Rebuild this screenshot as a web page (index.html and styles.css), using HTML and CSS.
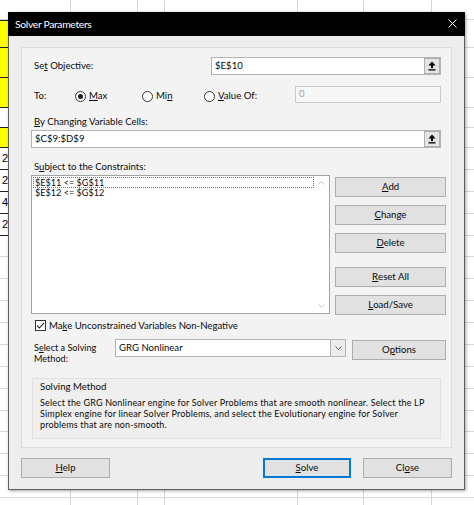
FILE: index.html
```html
<!DOCTYPE html>
<html>
<head>
<meta charset="utf-8">
<title>Solver Parameters</title>
<link rel="stylesheet" href="styles.css">
</head>
<body>
<div class="sheet">
  <div class="srow h20"><div class="ca"></div><div class="rest"></div></div>
  <div class="srow h28"><div class="ca yellow first"></div><div class="rest"></div></div>
  <div class="srow h30"><div class="ca yellow"></div><div class="rest"></div></div>
  <div class="srow h30"><div class="ca yellow"></div><div class="rest"></div></div>
  <div class="srow h20"><div class="ca plain"></div><div class="rest"></div></div>
  <div class="srow h20"><div class="ca yellow"></div><div class="rest"></div></div>
  <div class="srow hr"><div class="ca boxed">2</div><div class="rest"></div></div>
  <div class="srow hr"><div class="ca boxed">2</div><div class="rest"></div></div>
  <div class="srow hr"><div class="ca boxed">4</div><div class="rest"></div></div>
  <div class="srow hr"><div class="ca boxed">2</div><div class="rest"></div></div>
  <div class="srow hr"><div class="ca"></div><div class="rest"></div></div>
  <div class="srow hr"><div class="ca"></div><div class="rest"></div></div>
  <div class="srow hr"><div class="ca"></div><div class="rest"></div></div>
  <div class="srow hr"><div class="ca"></div><div class="rest"></div></div>
  <div class="srow hr"><div class="ca"></div><div class="rest"></div></div>
  <div class="srow hr"><div class="ca"></div><div class="rest"></div></div>
  <div class="srow hr"><div class="ca"></div><div class="rest"></div></div>
  <div class="srow hr"><div class="ca"></div><div class="rest"></div></div>
  <div class="srow hr"><div class="ca"></div><div class="rest"></div></div>
  <div class="srow hr"><div class="ca"></div><div class="rest"></div></div>
  <div class="srow hr"><div class="ca"></div><div class="rest"></div></div>
  <div class="srow hr"><div class="ca"></div><div class="rest"></div></div>
  <div class="srow hr"><div class="ca"></div><div class="rest"></div></div>
</div>

<div class="dialog">
  <div class="titlebar">
    <span class="title">Solver Parameters</span>
    <svg class="close" width="9" height="9" viewBox="0 0 9 9"><path d="M0.5 0.5 L8.5 8.5 M8.5 0.5 L0.5 8.5" stroke="#fff" stroke-width="1" fill="none"/></svg>
  </div>
  <div class="dlg-body">
    <div class="panel">
      <div class="row-obj">
        <span class="lbl">Se<u>t</u> Objective:</span>
        <div class="refedit obj">
          <span class="val">$E$10</span>
          <span class="rbtn"><svg width="8" height="10" viewBox="0 0 8 10"><polygon points="4,0.5 7.6,4.6 5,4.6 5,7 3,7 3,4.6 0.4,4.6" fill="#000"/><rect x="0.5" y="8.2" width="7" height="1.3" fill="#000"/></svg></span>
        </div>
      </div>
      <div class="row-to">
        <span class="lbl to">To:</span>
        <span class="radio r-max"><span class="circle on"></span><span class="rtxt"><u>M</u>ax</span></span>
        <span class="radio r-min"><span class="circle"></span><span class="rtxt">Mi<u>n</u></span></span>
        <span class="radio r-val"><span class="circle"></span><span class="rtxt"><u>V</u>alue Of:</span></span>
        <span class="textbox disabled">0</span>
      </div>
      <div class="lbl sec"><u>B</u>y Changing Variable Cells:</div>
      <div class="refedit full">
        <span class="val">$C$9:$D$9</span>
        <span class="rbtn"><svg width="8" height="10" viewBox="0 0 8 10"><polygon points="4,0.5 7.6,4.6 5,4.6 5,7 3,7 3,4.6 0.4,4.6" fill="#000"/><rect x="0.5" y="8.2" width="7" height="1.3" fill="#000"/></svg></span>
      </div>
      <div class="lbl sec">S<u>u</u>bject to the Constraints:</div>
      <div class="constraints">
        <div class="listbox">
          <div class="items">
            <div class="item focus">$E$11 &lt;= $G$11</div>
            <div class="item">$E$12 &lt;= $G$12</div>
          </div>
          <div class="vscroll">
            <span class="chev"><svg width="7" height="4" viewBox="0 0 7 4"><path d="M0.5 3.5 L3.5 0.5 L6.5 3.5" stroke="#c4c4c4" stroke-width="1" fill="none"/></svg></span>
            <span class="chev"><svg width="7" height="4" viewBox="0 0 7 4"><path d="M0.5 0.5 L3.5 3.5 L6.5 0.5" stroke="#c4c4c4" stroke-width="1" fill="none"/></svg></span>
          </div>
        </div>
        <div class="side-btns">
          <div class="btn"><u>A</u>dd</div>
          <div class="btn"><u>C</u>hange</div>
          <div class="btn"><u>D</u>elete</div>
          <div class="btn gap-big"><u>R</u>eset All</div>
          <div class="btn"><u>L</u>oad/Save</div>
        </div>
      </div>
      <div class="check-row">
        <span class="checkbox"><svg width="9" height="9" viewBox="0 0 9 9"><path d="M1 4.6 L3.4 7 L8 1.8" stroke="#222" stroke-width="1.1" fill="none"/></svg></span>
        <span class="ctxt">Ma<u>k</u>e Unconstrained Variables Non-Negative</span>
      </div>
      <div class="method-row">
        <div class="lbl method-lbl"><div class="mline">S<u>e</u>lect a Solving</div><div class="mline">Method:</div></div>
        <div class="select">
          <span class="sval">GRG Nonlinear</span>
          <span class="drop"><svg width="7" height="4" viewBox="0 0 7 4"><path d="M0.5 0.5 L3.5 3.5 L6.5 0.5" stroke="#555" stroke-width="1" fill="none"/></svg></span>
        </div>
        <div class="btn options">O<u>p</u>tions</div>
      </div>
      <div class="groupbox">
        <div class="gb-title">Solving Method</div>
        <div class="gb-text">
          <div class="gline">Select the GRG Nonlinear engine for Solver Problems that are smooth nonlinear. Select the LP</div>
          <div class="gline">Simplex engine for linear Solver Problems, and select the Evolutionary engine for Solver</div>
          <div class="gline">problems that are non-smooth.</div>
        </div>
      </div>
    </div>
    <div class="footer">
      <div class="btn fbtn"><u>H</u>elp</div>
      <div class="btn fbtn solve"><u>S</u>olve</div>
      <div class="btn fbtn close-btn">Cl<u>o</u>se</div>
    </div>
  </div>
</div>
</body>
</html>
```

FILE: styles.css
```css
* { box-sizing: border-box; }

html, body {
  margin: 0;
  padding: 0;
}

body {
  width: 474px;
  height: 505px;
  overflow: hidden;
  position: relative;
  background: #ffffff;
  font-family: "Lato", "Open Sans", sans-serif;
}

/* ---------- spreadsheet behind ---------- */
.sheet {
  display: flex;
  flex-direction: column;
  width: 474px;
  height: 505px;
  background-image:
    linear-gradient(#d6d6d6, #d6d6d6),
    linear-gradient(#d6d6d6, #d6d6d6),
    linear-gradient(#d6d6d6, #d6d6d6),
    linear-gradient(#d6d6d6, #d6d6d6),
    linear-gradient(#d6d6d6, #d6d6d6),
    linear-gradient(#d6d6d6, #d6d6d6);
  background-size: 1px 100%;
  background-repeat: no-repeat;
  background-position: 70px 0, 137px 0, 164px 0, 297px 0, 363px 0, 431px 0;
}

.srow {
  display: flex;
  flex: none;
}
.h20 { height: 20px; }
.h28 { height: 28px; }
.h30 { height: 30px; }
.hr  { height: 21.875px; }

.ca {
  width: 70px;
  border-bottom: 1px solid #d6d6d6;
  font-family: "Liberation Sans", Arial, sans-serif;
  font-size: 11px;
  line-height: 20px;
  padding-left: 2px;
  color: #000;
}
.rest {
  flex: 1;
  border-bottom: 1px solid #d6d6d6;
}
.ca.yellow {
  background: #ffff00;
  border-bottom: 1px solid #222;
}
.ca.first { border-top: 1px solid #222; }
.ca.plain { border-bottom: 1px solid #222; }
.ca.boxed { border-bottom: 1px solid #222; }

/* ---------- dialog window ---------- */
.dialog {
  position: absolute;
  left: 8px;
  top: 12px;
  width: 457px;
  height: 478px;
  background: #ededed;
  border: 1px solid #5e5e5e;
  border-top: none;
  box-shadow: 1px 1px 3px rgba(0, 0, 0, 0.35);
  color: #0a0a0a;
  font-size: 9.6px;
  letter-spacing: 0;
}

.titlebar {
  height: 24px;
  margin: 0 -1px;
  background: #000;
  color: #fff;
  display: flex;
  align-items: center;
  justify-content: space-between;
  padding: 0 8px 1px 7px;
}
.title {
  font-size: 10.4px;
  letter-spacing: -0.35px;
}
.close { display: block; margin-top: -1px; }

.dlg-body {
  padding: 11px 12px 0 12px;
}

.panel {
  height: 401px;
  border: 1px solid #dcdcdc;
  background: #f3f3f3;
  padding: 9px 0 0 9px;
}

u { text-decoration: underline; text-underline-offset: 1px; }

.lbl {
  padding-left: 3px;
  line-height: 12px;
}

/* objective row */
.row-obj {
  width: 410px;
  height: 18px;
  display: flex;
  align-items: center;
}

.refedit {
  height: 18px;
  background: #fff;
  border: 1px solid #b3b3b3;
  display: flex;
  align-items: center;
  justify-content: space-between;
}
.refedit.obj {
  width: 230px;
  margin-left: auto;
}
.refedit.full {
  width: 410px;
  margin-top: 2px;
}
.val {
  padding-left: 3px;
  line-height: 14px;
}
.rbtn {
  width: 16px;
  height: 16px;
  background: #e4e4e4;
  border: 1px solid #b0b0b0;
  display: flex;
  align-items: center;
  justify-content: center;
}
.rbtn svg { display: block; }

/* To row */
.row-to {
  margin-top: 11px;
  height: 17px;
  display: flex;
  align-items: flex-start;
}
.lbl.to {
  width: 44px;
  margin-top: 4px;
}
.radio {
  display: flex;
  align-items: center;
  height: 12px;
  margin-top: 4px;
}
.r-max { width: 67px; }
.r-min { width: 62px; }
.r-val { width: 91px; }
.circle {
  width: 11px;
  height: 11px;
  border: 1px solid #333;
  border-radius: 50%;
  background: #fff;
  display: flex;
  align-items: center;
  justify-content: center;
  flex: none;
}
.circle.on::after {
  content: "";
  width: 5px;
  height: 5px;
  border-radius: 50%;
  background: #222;
}
.rtxt {
  margin-left: 3px;
  line-height: 12px;
}
.textbox {
  width: 146px;
  height: 17px;
  border: 1px solid #c9c9c9;
  padding-left: 3px;
  line-height: 14px;
}
.textbox.disabled {
  background: #f7f7f7;
  color: #a3a3a3;
}

.lbl.sec {
  margin-top: 13px;
  height: 12px;
}

/* constraints */
.constraints {
  margin-top: 2px;
  display: flex;
  align-items: flex-start;
}
.listbox {
  width: 299px;
  height: 139px;
  background: #fff;
  border: 1px solid #a2a2a2;
  display: flex;
}
.items {
  flex: 1;
  padding-top: 1px;
  padding-left: 1px;
}
.item {
  height: 11px;
  line-height: 10px;
  font-size: 9.1px;
  padding-left: 1px;
  width: 281px;
  border: 1px solid transparent;
  border-top: none;
  border-bottom: none;
}
.item.focus {
  border: 1px dotted #777;
  line-height: 9px;
}
.vscroll {
  width: 15px;
  display: flex;
  flex-direction: column;
  justify-content: space-between;
}
.chev {
  height: 14px;
  display: flex;
  align-items: center;
  justify-content: center;
}
.chev svg { display: block; }

.side-btns {
  margin-left: 5px;
  width: 111px;
  padding-top: 2px;
  display: flex;
  flex-direction: column;
  gap: 8px;
}
.btn {
  height: 20px;
  background: #e1e1e1;
  border: 1px solid #adadad;
  display: flex;
  align-items: center;
  justify-content: center;
  line-height: 12px;
  color: #0a0a0a;
}
.btn.gap-big { margin-top: 6px; }

/* checkbox */
.check-row {
  margin-top: 5px;
  height: 11px;
  display: flex;
  align-items: center;
  padding-left: 4px;
}
.checkbox {
  width: 11px;
  height: 11px;
  border: 1px solid #333;
  background: #fff;
  display: flex;
  align-items: center;
  justify-content: center;
  flex: none;
}
.checkbox svg { display: block; }
.ctxt {
  margin-left: 3px;
  line-height: 12px;
}

/* method row */
.method-row {
  margin-top: 8px;
  height: 24px;
  display: flex;
  align-items: flex-start;
}
.method-lbl {
  width: 84px;
  margin-top: 3px;
  font-size: 9.1px;
}
.mline {
  height: 11px;
  line-height: 11px;
}
.select {
  width: 231px;
  height: 18px;
  background: #fff;
  border: 1px solid #b3b3b3;
  display: flex;
  align-items: center;
  justify-content: space-between;
}
.sval {
  padding-left: 3px;
  line-height: 14px;
}
.drop {
  width: 15px;
  height: 16px;
  background: #ececec;
  border-left: 1px solid #b3b3b3;
  display: flex;
  align-items: center;
  justify-content: center;
}
.drop svg { display: block; }
.btn.options {
  width: 94px;
  margin-left: 6px;
  margin-top: 1px;
}

/* group box */
.groupbox {
  margin-top: 15px;
  margin-left: 1px;
  width: 409px;
  height: 61px;
  background: #efefef;
  border: 1px solid #e0e0e0;
  padding: 3px 0 0 7px;
}
.gb-title {
  line-height: 10px;
}
.gb-text {
  margin-top: 5px;
  font-size: 9px;
  letter-spacing: 0.17px;
}
.gline {
  height: 11px;
  line-height: 11px;
  white-space: nowrap;
}

/* footer */
.footer {
  margin-top: 10px;
  display: flex;
}
.fbtn {
  width: 89px;
}
.solve {
  width: 88px;
  margin-left: auto;
  border: 1px solid #0078d7;
  box-shadow: inset 0 0 0 1px #0078d7;
  background: #e1e1e1;
}
.close-btn {
  margin-left: 12px;
}
```
